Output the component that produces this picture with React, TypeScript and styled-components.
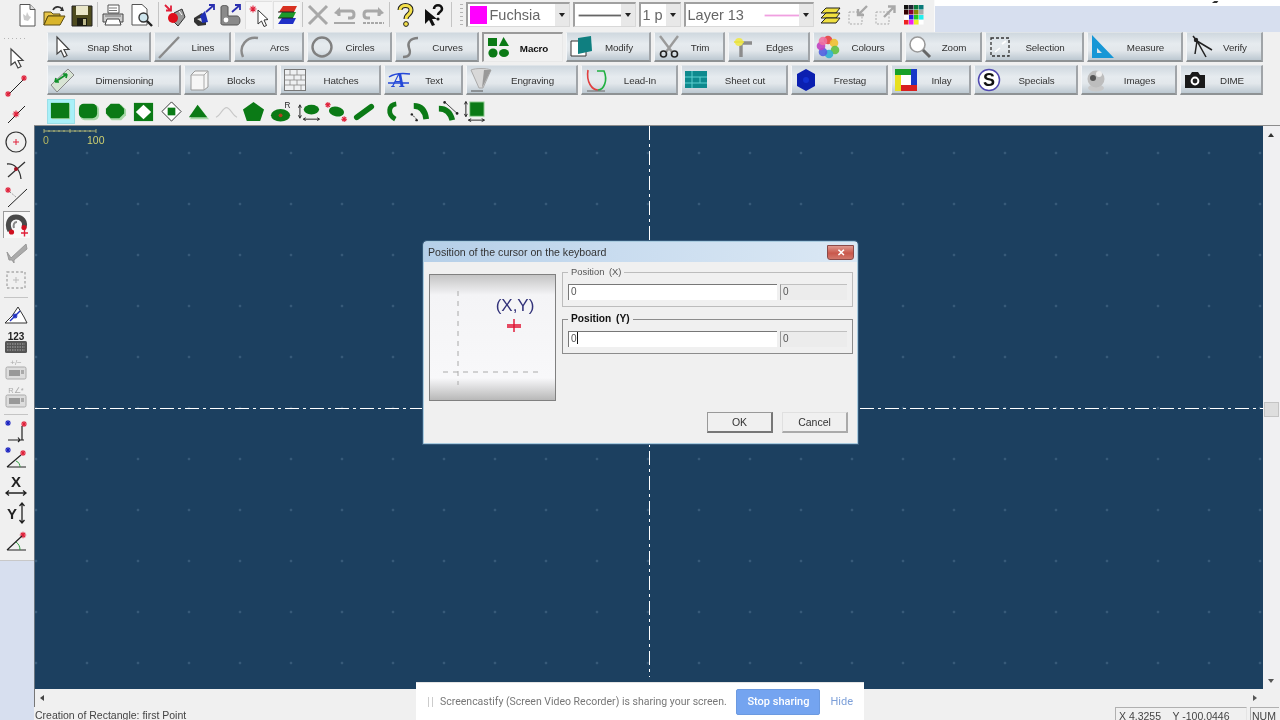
import React from 'react';
import styled, { createGlobalStyle } from 'styled-components';

const GlobalStyle = createGlobalStyle`
  html, body { margin: 0; padding: 0; background: #f0f0f0; overflow: hidden; }
  * { box-sizing: border-box; }
`;

const Page = styled.div`
  position: relative;
  width: 1280px;
  height: 720px;
  overflow: hidden;
  display: flex;
  flex-direction: column;
  background: #f0f0f0;
  font-family: "Liberation Sans", Arial, sans-serif;
  color: #333;
  filter: blur(0.45px);
`;

/* ---------- small drawing helpers ---------- */

const G = '#0b7a16';
const GL = '#a8d8a8';

const Star = ({ x, y, c = '#e0203a', r = 3 }: { x: number; y: number; c?: string; r?: number }) => (
  <path d={`M${x - r} ${y}H${x + r}M${x} ${y - r}V${y + r}M${x - r * 0.7} ${y - r * 0.7}L${x + r * 0.7} ${y + r * 0.7}M${x + r * 0.7} ${y - r * 0.7}L${x - r * 0.7} ${y + r * 0.7}`} stroke={c} strokeWidth="1.1" fill="none" />
);

const Arrow = ({ d, c = '#2a2fb0' }: { d: string; c?: string }) => (
  <path d={d} stroke={c} strokeWidth="1.8" fill="none" />
);

const icons: Record<string, React.ReactNode> = {
  // top toolbar
  new: (<><path d="M5 1.5H15L20 6.5V23H5Z" fill="#fff" stroke="#555" /><path d="M15 1.5V6.5H20" fill="#ddd" stroke="#555" /><path d="M9 17L8 11L11 13L12 9L14 13L16 14L13 18Z" fill="#ccc" /></>),
  open: (<><path d="M2 9H9L11 11H18V13H6L2 22Z" fill="#e8c64a" stroke="#5a4a10" /><path d="M2 22L6 13H23L18 22Z" fill="#d9b52c" stroke="#5a4a10" /><path d="M11 7C13 3 18 3 20 6" stroke="#333" strokeWidth="1.6" fill="none" /><path d="M22 8L18 8L20.5 3.5Z" fill="#333" /></>),
  save: (<><path d="M2 3H22V23H2Z" fill="#4e4b1e" stroke="#222" /><path d="M6 3H18V12H6Z" fill="#e9e6c8" /><path d="M7 15H17V23H7Z" fill="#1c1c10" /><path d="M13 16H16V22H13Z" fill="#bdb98c" /></>),
  print: (<><path d="M7 2H18V10H7Z" fill="#fff" stroke="#555" /><path d="M2 11H22V19H2Z" fill="#cfcfcf" stroke="#444" /><path d="M6 16H18L20 22H4Z" fill="#fff" stroke="#444" /><path d="M8 5H16M8 7.5H16M4 13H20" stroke="#777" /></>),
  preview: (<><path d="M3 1.5H13L18 6V22H3Z" fill="#fff" stroke="#555" /><circle cx="14.5" cy="14.5" r="4.5" fill="#cfe6ee" stroke="#333" strokeWidth="1.4" /><path d="M18 18L23 23" stroke="#222" strokeWidth="2.4" /></>),
  ball: (<><path d="M11 10L19 6L22 14L15 23L11 19Z" fill="#999" stroke="#333" /><circle cx="10" cy="15" r="5" fill="#e0101c" /><path d="M16 8L19 12" stroke="#fff" /><Arrow d="M2 2L8 8M3 7.5H8V2.5" c="#e0203a" /></>),
  block: (<><path d="M3 15L11 10L15 14L15 22L7 23L3 19Z" fill="#333" /><path d="M9 13L14 8L17 19L11 20Z" fill="#1f2fb5" /><path d="M6 16L10 15L11 19Z" fill="#ddd" /><Arrow d="M15 9L23 2M18 2H23V7" /></>),
  tube: (<><path d="M3 4C3 2 10 2 10 4V13H19C23 13 23 22 19 22H6C2 22 3 20 3 18Z" fill="#8a8a8a" stroke="#555" /><circle cx="8" cy="17" r="2.4" fill="#fff" /><Arrow d="M14 9L22 2M17 2H22V7" /></>),
  cursorPlus: (<><Star x={6} y={6} r={3.5} /><path d="M11 7V21L14.5 18L17 23.5L19.5 22.5L17 17L21 16.5Z" fill="#fff" stroke="#333" /></>),
  layers: (<><path d="M4 9L8 3H22L19 9Z" fill="#d83020" /><path d="M3 15L7 9H21L18 15Z" fill="#1f9a2a" /><path d="M3 21L7 15H21L18 21Z" fill="#2030c8" /><path d="M3 9H19M3 15H18" stroke="#222" /></>),
  cross: <path d="M3 3L21 21M21 3L3 21" stroke="#a8a8a8" strokeWidth="3" />,
  undo: (<><path d="M6 13V8H18C22 8 22 15 18 15H15" stroke="#a8a8a8" strokeWidth="3" fill="none" /><path d="M1 10L7 4V13Z" fill="#a8a8a8" /><path d="M1 20H22" stroke="#a8a8a8" strokeWidth="2" /></>),
  redo: (<><path d="M18 13V8H6C2 8 2 15 6 15H9" stroke="#a8a8a8" strokeWidth="3" fill="none" /><path d="M23 10L17 4V13Z" fill="#a8a8a8" /><path d="M2 20H23" stroke="#a8a8a8" strokeWidth="2" strokeDasharray="3 1" /></>),
  help: (<><path d="M7 7C7 1 18 1 18 7C18 12 13 11 13 16" stroke="#222" strokeWidth="5" fill="none" /><path d="M7 7C7 1 18 1 18 7C18 12 13 11 13 16" stroke="#f4e04a" strokeWidth="3" fill="none" /><circle cx="13" cy="21" r="2.4" fill="#f4e04a" stroke="#222" /></>),
  whatsThis: (<><path d="M4 6V21L8 17L11 23L14 22L11 16H16Z" fill="#111" /><path d="M13 6C13 1 21 1 21 6C21 9 17 9 17 12" stroke="#111" strokeWidth="2.6" fill="none" /><circle cx="17" cy="16" r="1.6" fill="#111" /></>),
  stack: (<><path d="M3 10L8 5H22L18 10Z" fill="#f0e040" stroke="#222" /><path d="M3 15L8 10H22L18 15Z" fill="#f0e040" stroke="#222" /><path d="M3 20L8 15H22L18 20Z" fill="#f0e040" stroke="#222" /></>),
  layerIn: (<><path d="M3 9H16V21H3Z" fill="none" stroke="#aaa" strokeDasharray="2 1.5" /><path d="M21 3L12 12M12 6V12H18" stroke="#a8a8a8" strokeWidth="2.4" fill="none" /></>),
  layerOut: (<><path d="M3 9H16V21H3Z" fill="none" stroke="#aaa" strokeDasharray="2 1.5" /><path d="M11 14L21 4M15 3.5H21.5V10" stroke="#a8a8a8" strokeWidth="2.4" fill="none" /></>),
  palette: (<>{[
    ['#111', '#223', '#0a7a3a', '#0a7a7a'], ['#300', '#803', '#880', '#aaa'], ['#fff', '#22d', '#2c2', '#2ee'], ['#e22', '#e2e', '#ee2', '#fff'],
  ].map((row, j) => row.map((c, i) => <rect key={`${i}-${j}`} x={3 + i * 5} y={2 + j * 5} width="4.5" height="4.5" fill={c} />))}</>),

  // labelled buttons
  arrow: <path d="M7 2V19L11 15.5L14 22L17 20.5L14 14.5H19Z" fill="#fff" stroke="#444" strokeWidth="1.2" />,
  lines: <path d="M2 23L22 2" stroke="#8a8a8a" strokeWidth="2.4" />,
  arcs: <path d="M21 3C10 1 1 11 6 22" stroke="#8a8a8a" strokeWidth="2.4" fill="none" />,
  circles: <circle cx="12" cy="12" r="9.5" stroke="#808080" strokeWidth="2.4" fill="none" />,
  curves: <path d="M5 22C12 22 13 18 11 13C9 8 12 3 20 3" stroke="#808080" strokeWidth="2.4" fill="none" />,
  macro: (<><rect x="2" y="2" width="9" height="8" fill={G} /><path d="M17.5 1L23 10H13Z" fill={G} /><circle cx="7" cy="17" r="4.6" fill={G} /><ellipse cx="18" cy="17" rx="5" ry="4" fill={G} /></>),
  modify: (<><path d="M2 6H17V21H2Z" fill="#fff" stroke="#333" /><path d="M9 3L22 1L23 16L9 19Z" fill="#0f7f80" /></>),
  trim: (<><path d="M3 1L15 17M21 1L9 17" stroke="#9a9a9a" strokeWidth="2.4" /><circle cx="6.5" cy="19" r="3" fill="none" stroke="#222" strokeWidth="1.6" /><circle cx="17.5" cy="19" r="3" fill="none" stroke="#222" strokeWidth="1.6" /></>),
  edges: (<><path d="M10 22V8H21" stroke="#8c8c8c" strokeWidth="3.4" fill="none" /><circle cx="8" cy="7" r="4" fill="#eee85a" /><path d="M3 7H13" stroke="#e8e040" strokeWidth="1.6" /></>),
  colours: (<>{[['#e84040', 12, 5], ['#f0c030', 18, 8], ['#60c040', 19, 15], ['#30b0d0', 13, 19], ['#5060e0', 7, 17], ['#c040c0', 5, 11], ['#f070a0', 7, 6]].map(([c, x, y]) => <circle key={c as string} cx={x as number} cy={y as number} r="4.3" fill={c as string} opacity="0.9" />)}</>),
  zoom: (<><circle cx="9.5" cy="9.5" r="7.5" fill="#fff" stroke="#999" strokeWidth="1.6" /><path d="M15 15L22 22" stroke="#666" strokeWidth="3" /></>),
  selection: (<><rect x="3" y="3" width="18" height="18" fill="none" stroke="#333" strokeDasharray="3 2" strokeWidth="1.3" /><path d="M7 17L12 13M14 9L18 6" stroke="#fff" strokeWidth="1.6" /></>),
  measure: <path fillRule="evenodd" d="M2 0L24 23H2ZM7 13V18H12Z" fill="#1797d6" />,
  verify: (<><path d="M4 1L8 6L17 22M8 6L6 19M8 6L23 15" stroke="#222" strokeWidth="1.5" fill="none" /><circle cx="7" cy="5" r="2.2" fill="#222" /></>),
  dimensioning: (<><path d="M1 17L18 1L24 7L7 24Z" fill="#d8e4d4" stroke="#888" /><path d="M5 14L17 6M5 14L9 14M5 14L6 10M17 6L13 6M17 6L16 10" stroke="#10902a" strokeWidth="1.7" fill="none" /></>),
  blocks: (<><path d="M4 7L8 3H21V19L17 22H4Z" fill="#f6f6f6" stroke="#999" /><path d="M4 7H17V22M17 7L21 3" fill="none" stroke="#aaa" /></>),
  hatches: (<><rect x="1.5" y="1.5" width="21" height="21" fill="#eef0f2" stroke="#777" /><path d="M1.5 7H22.5M1.5 12H22.5M1.5 17H22.5M7 1.5V7M14 1.5V7M11 7V12M18 7V12M7 12V17M14 12V17M11 17V22M18 17V22" stroke="#888" strokeWidth="0.8" /></>),
  textA: (<><path d="M2 9C8 5 15 5 23 6M1 15H22" stroke="#2448d8" strokeWidth="1.5" fill="none" /><text x="5" y="19" fontFamily="Liberation Serif, serif" fontStyle="italic" fontWeight="700" fontSize="20" fill="#2448d8">A</text></>),
  engraving: (<><path d="M2 2C6 0 18 0 22 2L14 20H10Z" fill="#d8d8d8" stroke="#aaa" /><path d="M15 2L13 20L22 2Z" fill="#999" /><path d="M2 23H14" stroke="#555" /></>),
  leadin: (<><path d="M4 2C2 14 8 22 14 22" stroke="#e04040" strokeWidth="1.6" fill="none" /><path d="M14 22C20 22 24 12 20 3H13" stroke="#20b040" strokeWidth="1.6" fill="none" /><path d="M3 23H21" stroke="#666" /></>),
  sheet: (<><rect x="1" y="3" width="22" height="17" fill="#0e8a8e" /><path d="M1 9H23M1 15H23M8 3V20M16 9V15" stroke="#5cd0d0" /></>),
  frestag: (<><path d="M12 1L21 6V18L12 23L3 18V6Z" fill="#0b1fb0" /><circle cx="12" cy="12" r="3" fill="#1230d0" /></>),
  inlay: (<><rect x="1" y="1" width="22" height="22" fill="#e8e020" /><rect x="1" y="1" width="16" height="6" fill="#18a028" /><rect x="17" y="1" width="6" height="16" fill="#1838c8" /><rect x="7" y="17" width="16" height="6" fill="#d82020" /><rect x="7" y="7" width="10" height="10" fill="#fff" /></>),
  specials: (<><circle cx="12" cy="12" r="10.5" fill="#fff" stroke="#5048b0" strokeWidth="1.5" /><text x="12" y="18" textAnchor="middle" fontFamily="Liberation Sans, sans-serif" fontWeight="700" fontSize="18" fill="#111">S</text></>),
  images: (<><ellipse cx="12" cy="20" rx="8" ry="3.5" fill="#c8c8c8" /><circle cx="12" cy="11" r="8.5" fill="#bdbdbd" /><circle cx="9" cy="10" r="3" fill="#555" /><circle cx="15" cy="6" r="3" fill="#eee" /></>),
  dime: (<><path d="M2 7H7L9 4H15L17 7H22V20H2Z" fill="#1a1a1a" /><circle cx="12" cy="13" r="4.4" fill="#fff" /><circle cx="12" cy="13" r="2.4" fill="#222" /></>),

  // drawing row
  rect: (<><rect x="3" y="4" width="19" height="16" fill={GL} /><rect x="2" y="3" width="19" height="16" fill={G} /></>),
  rounded: (<><rect x="3" y="5" width="20" height="16" rx="5" fill={GL} /><rect x="2" y="4" width="19" height="15" rx="5" fill={G} /></>),
  chamfer: (<><path d="M8 5H18L23 10V16L18 21H8L3 16V10Z" fill={GL} /><path d="M7 4H16L21 9V14L16 19H7L2 14V9Z" fill={G} /></>),
  diamondBox: (<><rect x="2" y="3" width="20" height="19" fill={G} /><path d="M12 5L20 12.5L12 20L4 12.5Z" fill="#fff" /></>),
  diamond: (<><path d="M12 2L22 12L12 22L2 12Z" fill="#fff" stroke="#333" /><rect x="8" y="8" width="8" height="8" fill={G} /></>),
  triangle: (<><path d="M12 6L23 20H3Z" fill={GL} /><path d="M11 5L21 18H2Z" fill={G} /></>),
  arcThin: <path d="M1 18C6 16 8 8 12 8C16 8 18 16 23 18" stroke="#c8c8c8" strokeWidth="1.2" fill="none" />,
  pentagon: (<><path d="M12 2L23 10L19 22H5L1 10Z" fill={G} /></>),
  ellipseR: (<><ellipse cx="11" cy="16" rx="10" ry="6.5" fill={G} /><circle cx="11" cy="16" r="2" fill="#b04020" /><text x="15" y="8" fontFamily="Liberation Sans, sans-serif" fontSize="8.5" fill="#222">R</text></>),
  ellipseDim: (<><ellipse cx="14" cy="10" rx="8" ry="5" fill={G} /><path d="M2 6V18M0.5 8L2 5L3.5 8M0.5 16L2 19L3.5 16M6 20H22M8 18.5L5.5 20L8 21.5M20 18.5L22.5 20L20 21.5" stroke="#222" strokeWidth="1" fill="none" /></>),
  ellipsePts: (<><ellipse cx="12" cy="12" rx="8" ry="5" fill={G} transform="rotate(12 12 12)" /><Star x={3} y={5} r={3} /><Star x={20} y={20} r={3} /></>),
  slot: <path d="M4 18L19 7" stroke={G} strokeWidth="6" strokeLinecap="round" />,
  cShape: <path d="M17 4C9 5 7 15 16 20" stroke={G} strokeWidth="5" fill="none" />,
  arcBand: (<><path d="M6 6C14 6 18 11 19 20" stroke={G} strokeWidth="6" fill="none" /><path d="M4 15L9 20" stroke="#222" strokeDasharray="1.5 1" /><circle cx="4" cy="15" r="1.3" fill="#222" /><circle cx="9" cy="21" r="1.3" fill="#222" /></>),
  arcBand2: (<><path d="M3 9C11 9 15 13 17 21" stroke={G} strokeWidth="6" fill="none" /><path d="M9 2L22 14" stroke="#444" /><circle cx="9" cy="2.5" r="1.4" fill="#222" /><circle cx="22" cy="14" r="1.4" fill="#222" /></>),
  rectDim: (<><rect x="7" y="2" width="15" height="15" fill={G} stroke={GL} /><path d="M3 2V17M1.5 4.5L3 1.5L4.5 4.5M1.5 14.5L3 17.5L4.5 14.5M6 21H22M8.5 19.5L5.5 21L8.5 22.5M19.5 19.5L22.5 21L19.5 22.5" stroke="#222" fill="none" /></>),

  // left toolbar
  pick: <path d="M7 2V18L11 15L14 21L17 19.5L14 13.5H19Z" fill="#fff" stroke="#444" strokeWidth="1.2" />,
  segment: (<><path d="M5 20L20 5" stroke="#222" /><Star x={4} y={20} r={3} /><Star x={20} y={4} r={3} /></>),
  midpoint: (<><path d="M4 21L21 4" stroke="#222" /><Star x={12} y={12} r={3.4} /></>),
  circlePt: (<><circle cx="12" cy="12" r="10" fill="none" stroke="#333" strokeWidth="1.2" /><path d="M9 12H15M12 9V15" stroke="#e0203a" /></>),
  intersect: (<><path d="M3 7C10 6 16 12 17 22M4 20L21 5" stroke="#333" strokeWidth="1.3" fill="none" /><circle cx="12" cy="12" r="2" fill="#a01020" /></>),
  perp: (<><Star x={4} y={5} r={3} /><path d="M6 7L12 12" stroke="#888" strokeDasharray="1.5 1.5" /><path d="M4 22L23 4" stroke="#222" /></>),
  magnet: (<><path d="M5 18C1 10 5 4 11 4C17 4 21 9 19 14" stroke="#4a4a4a" strokeWidth="5" fill="none" /><path d="M12 9C9 9 8 12 9 15" stroke="#888" strokeWidth="2" fill="none" /><circle cx="6.5" cy="19" r="2.6" fill="#d01020" /><circle cx="19" cy="14.5" r="2.6" fill="#d01020" /><path d="M16 20H23M19.5 16.5V23.5" stroke="#e0203a" strokeWidth="1.4" /></>),
  check: <path d="M3 12L7 18L22 4L23 9L10 20V23L8 20L5 20Z" fill="#aaa" stroke="#999" />,
  dashBox: (<><rect x="3" y="4" width="18" height="16" fill="none" stroke="#aaa" strokeWidth="1.4" strokeDasharray="2.5 2" /><path d="M9 12H15M12 9V15" stroke="#bbb" /></>),
  plane: (<><path d="M1 20L8 13L14 4L20 14L23 20Z" fill="#fff" stroke="#333" /><path d="M6 18L16 8" stroke="#2030c0" strokeWidth="1.4" /><Star x={11} y={13} c="#2030c0" r={2.5} /></>),
  kbd123: (<><text x="12" y="9" textAnchor="middle" fontFamily="Liberation Sans, sans-serif" fontWeight="700" fontSize="10" fill="#222">123</text><rect x="1" y="10" width="22" height="12" rx="1.5" fill="#555" /><path d="M3 13H21M3 16H21M3 19H21" stroke="#aaa" strokeDasharray="1.5 1" /></>),
  kbdSign: (<><text x="12" y="7" textAnchor="middle" fontFamily="Liberation Sans, sans-serif" fontSize="8" fill="#aaa">+/−</text><rect x="2" y="9" width="20" height="12" rx="1.5" fill="#ddd" stroke="#aaa" /><rect x="5" y="12" width="11" height="6" fill="#999" /><rect x="17" y="12" width="3" height="4" fill="#aaa" /></>),
  kbdPolar: (<><text x="12" y="7" textAnchor="middle" fontFamily="Liberation Sans, sans-serif" fontSize="7.5" fill="#aaa">R∠*</text><rect x="2" y="9" width="20" height="12" rx="1.5" fill="#ddd" stroke="#aaa" /><rect x="5" y="12" width="11" height="6" fill="#999" /><rect x="17" y="12" width="3" height="4" fill="#aaa" /></>),
  xyAbs: (<><Star x={4} y={4} c="#1820c0" r={3} /><Star x={20} y={5} r={3} /><path d="M18 7V21H4M20 21H16L14 18.5M16 21L14 23" stroke="#222" strokeWidth="1.2" fill="none" /></>),
  polar: (<><Star x={4} y={4} c="#1820c0" r={3} /><Star x={19} y={7} r={3} /><path d="M3 21H22M3 21L17 9" stroke="#222" strokeWidth="1.2" /><path d="M12 15C15 16 16 19 16 21" stroke="#30a040" fill="none" /></>),
  axisX: (<><text x="12" y="13" textAnchor="middle" fontFamily="Liberation Sans, sans-serif" fontWeight="700" fontSize="15" fill="#222">X</text><path d="M2 19H22M5 16.5L2 19L5 21.5M19 16.5L22 19L19 21.5" stroke="#222" strokeWidth="1.3" fill="none" /></>),
  axisY: (<><text x="8" y="18" textAnchor="middle" fontFamily="Liberation Sans, sans-serif" fontWeight="700" fontSize="15" fill="#222">Y</text><path d="M18 2V22M15.5 5L18 2L20.5 5M15.5 19L18 22L20.5 19" stroke="#222" strokeWidth="1.3" fill="none" /></>),
  angle: (<><Star x={19} y={6} r={3.2} /><path d="M3 21H22M3 21L18 7" stroke="#222" strokeWidth="1.2" /><path d="M12 13C15 15 16 18 16 21" stroke="#30a040" fill="none" /></>),
};

const GlyphSvg = styled.svg<{ $size: number }>`
  width: ${(p) => p.$size}px;
  height: ${(p) => p.$size}px;
  flex: none;
  display: block;
`;

const Glyph = ({ name, size = 24 }: { name: string; size?: number }) => (
  <GlyphSvg $size={size} viewBox="0 0 24 24">{icons[name]}</GlyphSvg>
);

/* ---------- top toolbar ---------- */

const TopStrip = styled.div`
  height: 32px;
  display: flex;
  flex: none;
`;

const TopBar = styled.div`
  width: 935px;
  display: flex;
  align-items: center;
  padding: 0 0 3px 13px;
  border-right: 1px solid #fafafa;
`;

const TopFiller = styled.div`
  flex: 1;
  background: #d7dfef;
  border-top: 6px solid #fff;
  position: relative;
`;

const TopMark = styled.span`
  position: absolute;
  left: 278px;
  top: -6px;
  width: 5px;
  height: 3px;
  border-bottom: 2px solid #333;
  border-left: 1px solid transparent;
  transform: skewX(-35deg);
`;

const Gripper = styled.div`
  width: 3px;
  height: 22px;
  margin: 0 3px;
  background: repeating-linear-gradient(180deg, #b4b4b4 0 1px, transparent 1px 4px);
`;

const TopSlot = styled.div<{ $boxed?: boolean }>`
  width: ${(p) => (p.$boxed ? '27px' : '27.5px')};
  height: 28px;
  display: flex;
  align-items: center;
  justify-content: center;
  ${(p) => p.$boxed && `
    background: #f6f6f6;
    border-top: 1px solid #e0e0e0;
    border-left: 1px solid #e0e0e0;
    margin-left: 1px;
  `}
`;

const TopSep = styled.div<{ $w: number }>`
  width: ${(p) => p.$w}px;
  height: 25px;
  display: flex;
  justify-content: center;
  &::after { content: ''; width: 1px; background: #c4c4c4; }
`;

const Combo = styled.div<{ $w: number }>`
  width: ${(p) => p.$w}px;
  height: 25px;
  margin-right: 3px;
  display: flex;
  align-items: center;
  background: #fff;
  border-top: 2px solid #a0a0a0;
  border-left: 2px solid #a0a0a0;
  border-right: 1px solid #d8d8d8;
  border-bottom: 1px solid #d8d8d8;
  font-size: 14.5px;
  color: #666;
`;

const ComboValue = styled.div`
  flex: 1;
  min-width: 0;
  height: 100%;
  display: flex;
  align-items: center;
  gap: 3px;
  padding-left: 2px;
  white-space: nowrap;
  overflow: hidden;
`;

const ComboDrop = styled.div`
  width: 14px;
  height: 100%;
  display: flex;
  align-items: center;
  justify-content: center;
  background: #e8e8e8;
  &::after {
    content: '';
    border-left: 3.5px solid transparent;
    border-right: 3.5px solid transparent;
    border-top: 4px solid #222;
  }
`;

const Swatch = styled.span`
  width: 17px;
  height: 18px;
  background: #ff00ff;
  flex: none;
`;

const LineSample = styled.span<{ $c: string; $w: number; $ml: number }>`
  width: ${(p) => p.$w}px;
  height: 1px;
  margin-left: ${(p) => p.$ml}px;
  background: ${(p) => p.$c};
  box-shadow: 0 0 0 0.4px ${(p) => p.$c};
  flex: none;
`;

/* ---------- body ---------- */

const Body = styled.div`
  flex: 1;
  min-height: 0;
  display: flex;
`;

const LeftCol = styled.div`
  width: 34px;
  flex: none;
  display: flex;
  flex-direction: column;
  background: #d7dfef;
`;

const LeftBar = styled.div`
  height: 529px;
  padding-right: 2px;
  background: #f0f0f0;
  border-bottom: 1px solid #c8c8c8;
  display: flex;
  flex-direction: column;
  align-items: center;
`;

const LeftGrip = styled.div`
  width: 24px;
  height: 13px;
  border-top: 6px solid transparent;
  background: repeating-linear-gradient(90deg, #b4b4b4 0 1px, transparent 1px 4px) 0 0 / 100% 1px no-repeat;
  background-origin: padding-box;
`;

const LeftSlot = styled.div<{ $boxed?: boolean }>`
  width: 27px;
  height: 27.6px;
  flex: none;
  display: flex;
  align-items: center;
  justify-content: center;
  ${(p) => p.$boxed && `
    background: #f8f8f8;
    border-top: 1px solid #9a9a9a;
    border-left: 1px solid #9a9a9a;
  `}
`;

const LeftSep = styled.div<{ $h: number }>`
  width: 24px;
  height: ${(p) => p.$h}px;
  flex: none;
  display: flex;
  align-items: center;
  &::after { content: ''; width: 100%; height: 1px; background: #c4c4c4; }
`;

const RightCol = styled.div`
  flex: 1;
  min-width: 0;
  display: flex;
  flex-direction: column;
`;

const ButtonRow = styled.div`
  display: flex;
  gap: 3px;
  height: 30px;
  margin-left: 13px;
  margin-bottom: 3px;
  flex: none;
`;

const ToolButton = styled.div<{ $w: number; $active?: boolean }>`
  width: ${(p) => p.$w}px;
  display: grid;
  grid-template-columns: 28px 1fr;
  align-items: center;
  justify-items: center;
  padding: 0 6px 0 0;
  font-size: 9.8px;
  letter-spacing: -0.12px;
  white-space: nowrap;
  span { padding-top: 2px; }
  ${(p) => p.$active ? `
    background: #f1f1f1;
    border-top: 2px solid #9a9a9a;
    border-left: 2px solid #9a9a9a;
    border-right: 1px solid #e8e8e8;
    border-bottom: 1px solid #e8e8e8;
    font-weight: 700;
    color: #111;
  ` : `
    background: linear-gradient(180deg, #cfd8df 0%, #e6ebef 40%, #e2e7eb 65%, #bcc8d1 100%);
    border-top: 1px solid #dfe4e8;
    border-left: 1px solid #f4f6f8;
    border-right: 2px solid #a0a4a8;
    border-bottom: 2px solid #8e9294;
  `}
`;

const ShapeRow = styled.div`
  display: flex;
  height: 28px;
  margin-left: 13px;
  margin-top: -1px;
  flex: none;
  align-items: center;
`;

const ShapeSlot = styled.div<{ $active?: boolean }>`
  width: 27.6px;
  height: 25px;
  display: flex;
  align-items: center;
  justify-content: center;
  ${(p) => p.$active && `
    background: #a9f0f8;
    border: 1px solid #9adfe8;
  `}
`;

const Workspace = styled.div`
  flex: 1;
  min-height: 0;
  display: flex;
  border-top: 1px solid #8c8c8c;
`;

const Canvas = styled.div`
  flex: 1;
  position: relative;
  background-color: #1c4060;
  background-image: radial-gradient(circle at center, #5d7d9a 0 0.8px, transparent 1.1px);
  background-size: 51px 51px;
  background-position: -24.5px 1.5px;
  border-left: 1px solid #6a7580;
`;

const ScaleSvg = styled.svg`
  position: absolute;
  left: 4px;
  top: 0;
  width: 80px;
  height: 24px;
`;

const CrossV = styled.div`
  position: absolute;
  left: 614px;
  top: 0;
  bottom: 12px;
  width: 1px;
  background: repeating-linear-gradient(180deg, #fff 0 14px, transparent 14px 18px, #fff 18px 21px, transparent 21px 25px);
`;

const CrossH = styled.div`
  position: absolute;
  left: 0;
  right: 0;
  top: 282px;
  height: 1px;
  background: repeating-linear-gradient(90deg, #fff 0 14px, transparent 14px 18px, #fff 18px 21px, transparent 21px 25px);
`;

const VScroll = styled.div`
  width: 17px;
  flex: none;
  position: relative;
  background: #f0f0f2;
`;

const ScrollArrowUp = styled.span`
  position: absolute;
  left: 5px;
  top: 7px;
  border-left: 3.5px solid transparent;
  border-right: 3.5px solid transparent;
  border-bottom: 4px solid #333;
`;

const ScrollArrowDown = styled.span`
  position: absolute;
  left: 5px;
  bottom: 6px;
  border-left: 3.5px solid transparent;
  border-right: 3.5px solid transparent;
  border-top: 4px solid #555;
`;

const ScrollThumb = styled.span`
  position: absolute;
  left: 1px;
  top: 276px;
  width: 15px;
  height: 15px;
  background: #dedede;
  border: 1px solid #c4c4c4;
`;

const HScroll = styled.div`
  height: 18px;
  flex: none;
  margin-right: 17px;
  display: flex;
  align-items: center;
  justify-content: space-between;
  padding: 0 6px 0 5px;
  background: #f0f0f0;
  border-left: 1px solid #777;
`;

const ScrollArrowLeft = styled.span`
  border-top: 3.5px solid transparent;
  border-bottom: 3.5px solid transparent;
  border-right: 4px solid #444;
`;

const ScrollArrowRight = styled.span`
  border-top: 3.5px solid transparent;
  border-bottom: 3.5px solid transparent;
  border-left: 4px solid #555;
`;

const StatusBar = styled.div`
  height: 13px;
  flex: none;
  display: flex;
  font-size: 10.5px;
  line-height: 13px;
  color: #444;
  overflow: hidden;
  background: #f0f0f0;
`;

const StatusMsg = styled.div`
  flex: 1;
  padding: 2px 0 0 1px;
`;

const StatusCoord = styled.div`
  width: 132px;
  margin-right: 3px;
  padding: 2px 0 0 3px;
  border-top: 1px solid #b0b0b0;
  border-left: 1px solid #b0b0b0;
  border-right: 1px solid #e4e4e4;
  white-space: pre;
`;

const StatusNum = styled.div`
  width: 29px;
  margin-right: 1px;
  padding: 2px 0 0 1px;
  border-top: 1px solid #b0b0b0;
  border-left: 1px solid #b0b0b0;
`;

/* ---------- dialog ---------- */

const Dialog = styled.div`
  position: absolute;
  left: 388px;
  top: 115px;
  width: 435px;
  height: 203px;
  display: flex;
  flex-direction: column;
  background: #f0f0f0;
  border: 1px solid #a9cbdf;
  border-radius: 4px 4px 0 0;
  box-shadow: 0 0 0 1px #35597a;
`;

const DialogTitle = styled.div`
  height: 20px;
  flex: none;
  display: flex;
  align-items: center;
  justify-content: space-between;
  padding: 0 3px 0 4px;
  font-size: 10.6px;
  color: #333;
  background: linear-gradient(90deg, #b5cfe8 0%, #c9dcef 45%, #dbe8f4 100%);
`;

const CloseBtn = styled.div`
  width: 27px;
  height: 15px;
  display: flex;
  align-items: center;
  justify-content: center;
  border: 1px solid #8a4a48;
  border-radius: 0 0 3px 3px;
  background: linear-gradient(180deg, #e09a90 0%, #c9584c 55%, #d2786c 100%);
  color: #fff;
  font-size: 10px;
  font-weight: 700;
`;

const DialogBody = styled.div`
  flex: 1;
  display: grid;
  grid-template-columns: 127px 1fr;
  grid-template-rows: 1fr auto;
  column-gap: 6px;
  padding: 4px 4px 10px 5px;
`;

const Preview = styled.div`
  margin-top: 8px;
  height: 127px;
  position: relative;
  border: 1px solid #808080;
  background: linear-gradient(180deg, #c4c4c4 0, #f4f4f6 20px, #f8f8fa 103px, #b8b8b8 100%);
  overflow: hidden;
`;

const PreviewSvg = styled.svg`
  display: block;
  width: 125px;
  height: 125px;
`;

const Fields = styled.div`
  display: flex;
  flex-direction: column;
  gap: 6px;
`;

const Group = styled.fieldset<{ $focus?: boolean }>`
  margin: 0;
  padding: 6px 5px 5px 5px;
  min-width: 0;
  height: 41px;
  display: flex;
  gap: 3px;
  border: 1px solid ${(p) => (p.$focus ? '#8c8c8c' : '#bcbcbc')};
`;

const GroupLabel = styled.legend<{ $focus?: boolean }>`
  margin-left: 0;
  padding: 0 3px;
  font-size: ${(p) => (p.$focus ? '10.2px' : '9.4px')};
  line-height: 12px;
  color: ${(p) => (p.$focus ? '#111' : '#555')};
  font-weight: ${(p) => (p.$focus ? 700 : 400)};
  word-spacing: 2px;
`;

const ValueInput = styled.div`
  width: 209px;
  height: 16px;
  padding-left: 2px;
  background: #fff;
  border-top: 1px solid #777;
  border-left: 1px solid #777;
  font-size: 10px;
  line-height: 14px;
  color: #555;
`;

const Caret = styled.span`
  display: inline-block;
  width: 1px;
  height: 12px;
  vertical-align: -2px;
  background: #111;
`;

const ValueEcho = styled.div`
  width: 67px;
  height: 16px;
  padding-left: 2px;
  background: #ececec;
  border-top: 1px solid #c0c0c0;
  border-left: 1px solid #999;
  font-size: 10px;
  line-height: 14px;
  color: #555;
`;

const DialogFooter = styled.div`
  grid-column: 1 / 3;
  display: flex;
  justify-content: flex-end;
  gap: 9px;
  padding-right: 5px;
`;

const DlgButton = styled.div<{ $primary?: boolean }>`
  width: 66px;
  height: 21px;
  display: flex;
  align-items: center;
  justify-content: center;
  font-size: 10.5px;
  color: #333;
  background: #f0f0f0;
  border-top: 1px solid ${(p) => (p.$primary ? '#999' : '#e0e0e0')};
  border-left: 1px solid ${(p) => (p.$primary ? '#999' : '#e0e0e0')};
  border-right: 2px solid ${(p) => (p.$primary ? '#777' : '#aaa')};
  border-bottom: 2px solid ${(p) => (p.$primary ? '#777' : '#aaa')};
`;

/* ---------- sharing banner ---------- */

const ShareBanner = styled.div`
  position: absolute;
  left: 416px;
  top: 682px;
  width: 448px;
  height: 38px;
  display: flex;
  align-items: center;
  padding: 0 11px 0 12px;
  background: #fff;
  border-top: 1px solid #e4e4e4;
  font-family: Roboto, "Liberation Sans", sans-serif;
  font-size: 10.5px;
  color: #777;
`;

const ShareGrip = styled.span`
  width: 5px;
  height: 10px;
  margin-right: 7px;
  flex: none;
  border-left: 1px solid #ccc;
  border-right: 1px solid #ccc;
`;

const ShareText = styled.span`
  flex: 1;
  white-space: nowrap;
`;

const StopButton = styled.div`
  width: 84px;
  height: 26px;
  flex: none;
  display: flex;
  align-items: center;
  justify-content: center;
  background: #74a4f0;
  border: 1px solid #6c9ae0;
  border-radius: 2px;
  color: #fff;
  font-size: 11px;
  font-weight: 500;
  margin-right: 10px;
`;

const HideLink = styled.span`
  color: #7c9fd8;
  font-size: 11px;
`;

/* ---------- data ---------- */

const rowOne = [
  ['arrow', 'Snap Shot', 104], ['lines', 'Lines', 77], ['arcs', 'Arcs', 70], ['circles', 'Circles', 85], ['curves', 'Curves', 84],
  ['macro', 'Macro', 81], ['modify', 'Modify', 85], ['trim', 'Trim', 71], ['edges', 'Edges', 82], ['colours', 'Colours', 89],
  ['zoom', 'Zoom', 77], ['selection', 'Selection', 99], ['measure', 'Measure', 96], ['verify', 'Verify', 77],
] as const;

const rowTwo = [
  ['dimensioning', 'Dimensioning', 134], ['blocks', 'Blocks', 93], ['hatches', 'Hatches', 101], ['textA', 'Text', 79],
  ['engraving', 'Engraving', 112], ['leadin', 'Lead-In', 97], ['sheet', 'Sheet cut', 107], ['frestag', 'Frestag', 97],
  ['inlay', 'Inlay', 80], ['specials', 'Specials', 104], ['images', 'Images', 96], ['dime', 'DIME', 83],
] as const;

const shapes = ['rect', 'rounded', 'chamfer', 'diamondBox', 'diamond', 'triangle', 'arcThin', 'pentagon', 'ellipseR', 'ellipseDim', 'ellipsePts', 'slot', 'cShape', 'arcBand', 'arcBand2', 'rectDim'];

const leftTools = [
  ['pick', 'segment', 'midpoint', 'circlePt', 'intersect', 'perp', 'magnet', 'check', 'dashBox'],
  ['plane', 'kbd123', 'kbdSign', 'kbdPolar'],
  ['xyAbs', 'polar', 'axisX', 'axisY', 'angle'],
];

const App = () => (
  <Page>
    <GlobalStyle />
    <TopStrip>
      <TopBar>
        {['new', 'open', 'save'].map((n) => <TopSlot key={n}><Glyph name={n} /></TopSlot>)}
        <TopSep $w={4} />
        {['print', 'preview'].map((n) => <TopSlot key={n}><Glyph name={n} /></TopSlot>)}
        <TopSep $w={7} />
        {['ball', 'block', 'tube'].map((n) => <TopSlot key={n}><Glyph name={n} /></TopSlot>)}
        <TopSlot $boxed><Glyph name="cursorPlus" /></TopSlot>
        <TopSlot $boxed><Glyph name="layers" /></TopSlot>
        <TopSep $w={4} />
        {['cross', 'undo', 'redo'].map((n) => <TopSlot key={n}><Glyph name={n} /></TopSlot>)}
        <TopSep $w={5} />
        {['help', 'whatsThis'].map((n) => <TopSlot key={n}><Glyph name={n} /></TopSlot>)}
        <TopSep $w={10} />
        <Gripper />
        <Combo $w={104}>
          <ComboValue><Swatch />Fuchsia</ComboValue>
          <ComboDrop />
        </Combo>
        <Combo $w={63}>
          <ComboValue><LineSample $c="#666" $w={42} $ml={2} /></ComboValue>
          <ComboDrop />
        </Combo>
        <Combo $w={42}>
          <ComboValue>1 p</ComboValue>
          <ComboDrop />
        </Combo>
        <Combo $w={130}>
          <ComboValue>Layer 13<LineSample $c="#f0a0e0" $w={38} $ml={18} /></ComboValue>
          <ComboDrop />
        </Combo>
        {['stack', 'layerIn', 'layerOut', 'palette'].map((n) => <TopSlot key={n}><Glyph name={n} /></TopSlot>)}
      </TopBar>
      <TopFiller><TopMark /></TopFiller>
    </TopStrip>

    <Body>
      <LeftCol>
        <LeftBar>
          <LeftGrip />
          {leftTools.map((group, i) => (
            <React.Fragment key={group[0]}>
              {i > 0 && <LeftSep $h={i === 1 ? 8 : 5} />}
              {group.map((n) => <LeftSlot key={n} $boxed={n === 'magnet'}><Glyph name={n} size={24} /></LeftSlot>)}
            </React.Fragment>
          ))}
        </LeftBar>
      </LeftCol>

      <RightCol>
        <ButtonRow>
          {rowOne.map(([icon, label, w]) => (
            <ToolButton key={label} $w={w} $active={label === 'Macro'}>
              <Glyph name={icon} />
              <span>{label}</span>
            </ToolButton>
          ))}
        </ButtonRow>
        <ButtonRow>
          {rowTwo.map(([icon, label, w]) => (
            <ToolButton key={label} $w={w}>
              <Glyph name={icon} />
              <span>{label}</span>
            </ToolButton>
          ))}
        </ButtonRow>
        <ShapeRow>
          {shapes.map((n, i) => (
            <ShapeSlot key={n} $active={i === 0}><Glyph name={n} size={23} /></ShapeSlot>
          ))}
        </ShapeRow>

        <Workspace>
          <Canvas>
            <ScaleSvg viewBox="0 0 80 24">
              <path d="M5 5H57M5 3V7M10 4V6M15 4V6M20 4V6M25 4V6M31 3V7M36 4V6M41 4V6M46 4V6M51 4V6M57 3V7" stroke="#c8c878" strokeWidth="0.8" fill="none" />
              <text x="4" y="18" fontFamily="Liberation Sans, sans-serif" fontSize="10.5" fill="#b8b860">0</text>
              <text x="48" y="18" fontFamily="Liberation Sans, sans-serif" fontSize="10.5" fill="#d0d070">100</text>
            </ScaleSvg>
            <CrossV />
            <CrossH />
            <Dialog>
              <DialogTitle>
                Position of the cursor on the keyboard
                <CloseBtn>✕</CloseBtn>
              </DialogTitle>
              <DialogBody>
                <Preview>
                  <PreviewSvg viewBox="0 0 125 125">
                    <path d="M28 16V110M13 97H110" stroke="#aaa" strokeDasharray="5 5" />
                    <text x="85" y="36" textAnchor="middle" fontFamily="Liberation Sans, sans-serif" fontSize="17" fill="#33337a">(X,Y)</text>
                    <path d="M77 50H91M77 52H91M84 44V57" stroke="#e01030" strokeWidth="1.4" />
                  </PreviewSvg>
                </Preview>
                <Fields>
                  <Group>
                    <GroupLabel>Position (X)</GroupLabel>
                    <ValueInput>0</ValueInput>
                    <ValueEcho>0</ValueEcho>
                  </Group>
                  <Group $focus>
                    <GroupLabel $focus>Position (Y)</GroupLabel>
                    <ValueInput>0<Caret /></ValueInput>
                    <ValueEcho>0</ValueEcho>
                  </Group>
                </Fields>
                <DialogFooter>
                  <DlgButton $primary>OK</DlgButton>
                  <DlgButton>Cancel</DlgButton>
                </DialogFooter>
              </DialogBody>
            </Dialog>
          </Canvas>
          <VScroll>
            <ScrollArrowUp />
            <ScrollThumb />
            <ScrollArrowDown />
          </VScroll>
        </Workspace>
        <HScroll>
          <ScrollArrowLeft />
          <ScrollArrowRight />
        </HScroll>
        <StatusBar>
          <StatusMsg>Creation of Rectangle: first Point</StatusMsg>
          <StatusCoord>{'X 4.3255    Y -100.0446'}</StatusCoord>
          <StatusNum>NUM</StatusNum>
        </StatusBar>
      </RightCol>
    </Body>

    <ShareBanner>
      <ShareGrip />
      <ShareText>Screencastify (Screen Video Recorder) is sharing your screen.</ShareText>
      <StopButton>Stop sharing</StopButton>
      <HideLink>Hide</HideLink>
    </ShareBanner>
  </Page>
);

export default App;
